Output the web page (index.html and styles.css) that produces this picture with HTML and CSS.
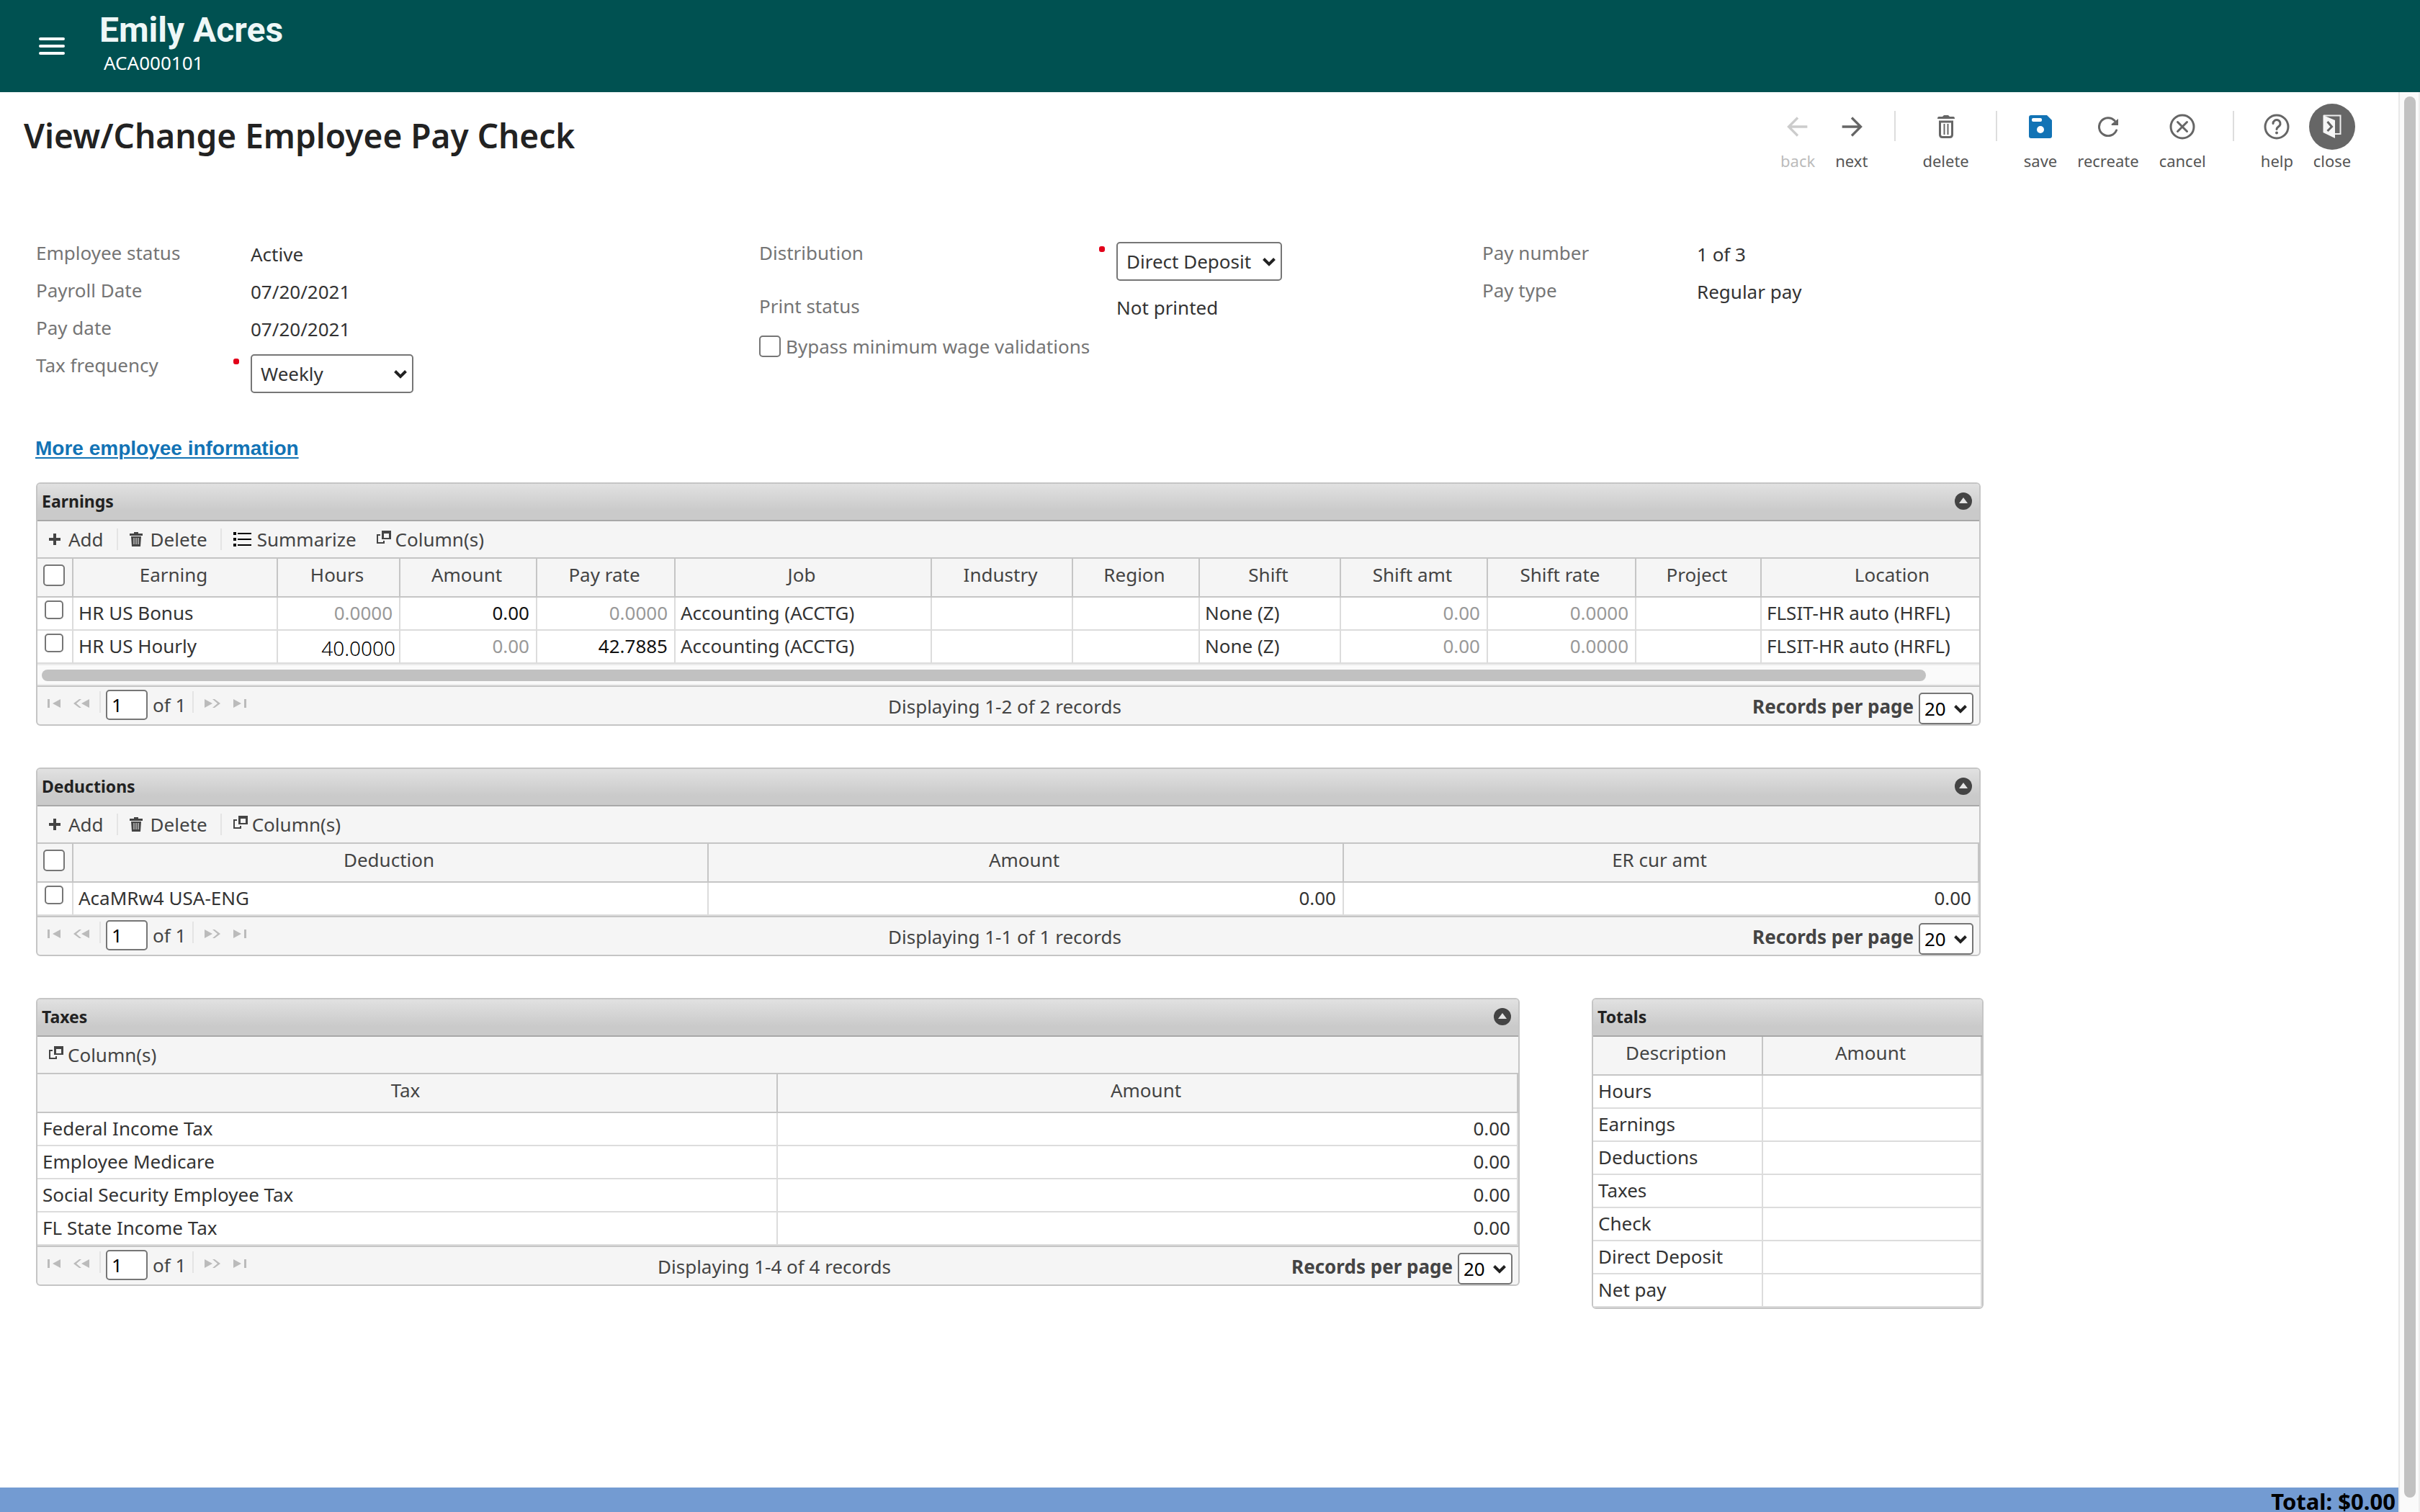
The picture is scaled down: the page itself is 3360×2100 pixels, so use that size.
FILE: index.html
```
<!DOCTYPE html>
<html lang="en">
<head>
    <meta charset="UTF-8">
    <meta name="viewport" content="width=device-width, initial-scale=1.0">
    <title>View/Change Employee Pay Check</title>
    <link rel="stylesheet" href="styles.css">
</head>
<body>

    <!-- ICON SHAPES -->
    <svg class="icon-defs" aria-hidden="true">
        <symbol id="i-plus" viewBox="0 0 16 16"><path d="M6 0h4v6h6v4h-6v6H6v-6H0V6h6z"/></symbol>
        <symbol id="i-trash" viewBox="0 0 18 20"><path d="M6 0h6v2h6v3H0V2h6zM2 6h14l-1 14H3zM5.500 8v9h1V8zm3 0v9h1V8zM11.500 8v9h1V8z" fill-rule="evenodd"/></symbol>
        <symbol id="i-list" viewBox="0 0 25 20"><path d="M0 0h4v4H0zM6 1h19v2H6zM0 8h4v4H0zM6 9h19v2H6zM0 16h4v4H0zM6 17h19v2H6z"/></symbol>
        <symbol id="i-columns" viewBox="0 0 20 18"><path d="M7 0h13v12H7zM10 4v6h7V4zM0 5h5v2H2v9h7v-2h2v4H0z" fill-rule="evenodd"/></symbol>
        <symbol id="i-first" viewBox="0 0 18 12"><path d="M0 0h3v12H0zM18 0v12L7 6z"/></symbol>
        <symbol id="i-prev" viewBox="0 0 22 12"><path d="M22 0v12L11 6zM8 0h3L4 6l7 6H8L0 6z"/></symbol>
        <symbol id="i-next" viewBox="0 0 22 12"><path d="M0 0v12l11-6zM14 0h-3l7 6-7 6h3l8-6z"/></symbol>
        <symbol id="i-last" viewBox="0 0 18 12"><path d="M15 0h3v12h-3zM0 0v12l11-6z"/></symbol>
        <symbol id="i-collapse" viewBox="0 0 24 24"><circle cx="12" cy="12" r="12" fill="#444"/><path d="M12 7l6 8H6z" fill="#e4e4e4"/></symbol>
    </svg>

    <header class="app-header">
        <button class="menu-button" type="button" aria-label="Menu">
            <svg width="36" height="24" viewBox="0 0 36 24"><path d="M2 2h32M2 12h32M2 22h32" stroke="#fff" stroke-width="4" stroke-linecap="round"/></svg>
        </button>
        <div>
            <p class="employee-name">Emily Acres</p>
            <p class="employee-id">ACA000101</p>
        </div>
    </header>

    <div class="viewport">
        <div class="page">
            <main>
                <!-- TITLE AND ACTIONS -->
                <div class="title-row">
                    <h1>View/Change Employee Pay Check</h1>
                    <div class="actions">
                        <button type="button" disabled>
                            <span class="action-icon"><svg width="40" height="40" viewBox="0 0 24 24"><path d="M20 12H5M12 4.500L4.500 12l7.500 7.500" fill="none" stroke="currentColor" stroke-width="2"/></svg></span>
                            back
                        </button>
                        <button type="button">
                            <span class="action-icon"><svg width="40" height="40" viewBox="0 0 24 24"><path d="M4 12h15M12 4.500l7.500 7.500-7.500 7.500" fill="none" stroke="currentColor" stroke-width="2"/></svg></span>
                            next
                        </button>
                        <span class="action-divider"></span>
                        <button type="button">
                            <span class="action-icon"><svg width="24" height="32" viewBox="0 0 24 32"><path d="M3.500 9h17v18q0 3.500-3.500 3.500H7q-3.500 0-3.500-3.500z" fill="none" stroke="currentColor" stroke-width="3"/><path d="M9.500 12v15M14.500 12v15" stroke="currentColor" stroke-width="2"/><path d="M2 2h5l2-2h6l2 2h5q2 0 2 3H0q0-3 2-3z" fill="currentColor"/></svg></span>
                            delete
                        </button>
                        <span class="action-divider"></span>
                        <button type="button">
                            <span class="action-icon"><svg width="32" height="32" viewBox="0 0 32 32"><path d="M3 0h22l7 7v22q0 3-3 3H3q-3 0-3-3V3q0-3 3-3z" fill="#1273b5"/><rect x="4" y="4" width="14" height="5" rx="2" fill="#fff"/><circle cx="16" cy="20" r="5" fill="#fff"/></svg></span>
                            save
                        </button>
                        <button type="button">
                            <span class="action-icon"><svg width="28" height="28" viewBox="0 0 28 28"><path d="M25.500 19A12.500 12.500 0 1 1 23 5.500" fill="none" stroke="currentColor" stroke-width="3" stroke-linecap="round"/><path d="M28 3v9H19q-1-1 0-2z" fill="currentColor"/></svg></span>
                            recreate
                        </button>
                        <button type="button">
                            <span class="action-icon"><svg width="36" height="36" viewBox="0 0 36 36"><g fill="none" stroke="currentColor" stroke-width="3" stroke-linecap="round"><circle cx="18" cy="18" r="16"/><path d="M11.500 11.500l13 13M24.500 11.500l-13 13"/></g></svg></span>
                            cancel
                        </button>
                        <span class="action-divider"></span>
                        <button type="button">
                            <span class="action-icon"><svg width="36" height="36" viewBox="0 0 36 36"><g fill="none" stroke="currentColor" stroke-width="3" stroke-linecap="round"><circle cx="18" cy="18" r="16"/><path d="M13 13.500a5 5 0 1 1 9 3c-2 2.500-4 2.500-4 5"/></g><circle cx="18" cy="26.500" r="2" fill="currentColor"/></svg></span>
                            help
                        </button>
                        <button class="close-button" type="button">
                            <span class="action-icon"><svg width="64" height="64" viewBox="0 0 64 64"><circle cx="32" cy="32" r="32" fill="#666"/><path d="M20 16.500h23.500v25.500H35" fill="none" stroke="#eee" stroke-width="2"/><path d="M19.500 16l16.500 7v25l-16.500-8z" fill="#f6f6f6"/><path d="M25.500 25l6 7-6 6" fill="none" stroke="#666" stroke-width="3"/></svg></span>
                            close
                        </button>
                    </div>
                </div>

                <!-- PAY CHECK DETAILS -->
                <div class="details">
                    <div class="details-column">
                        <div class="field"><span class="field-label">Employee status</span><span class="field-value">Active</span></div>
                        <div class="field"><span class="field-label">Payroll Date</span><span class="field-value">07/20/2021</span></div>
                        <div class="field"><span class="field-label">Pay date</span><span class="field-value">07/20/2021</span></div>
                        <div class="field">
                            <label class="field-label required" for="tax-frequency">Tax frequency</label>
                            <span class="field-value"><select class="select" id="tax-frequency"><option>Weekly</option></select></span>
                        </div>
                    </div>
                    <div class="details-column wide-labels">
                        <div class="field">
                            <label class="field-label required" for="distribution">Distribution</label>
                            <span class="field-value"><select class="select" id="distribution"><option>Direct Deposit</option></select></span>
                        </div>
                        <div class="field"><span class="field-label">Print status</span><span class="field-value">Not printed</span></div>
                        <label class="check-field"><input class="check" type="checkbox">Bypass minimum wage validations</label>
                    </div>
                    <div class="details-column">
                        <div class="field"><span class="field-label">Pay number</span><span class="field-value">1 of 3</span></div>
                        <div class="field"><span class="field-label">Pay type</span><span class="field-value">Regular pay</span></div>
                    </div>
                </div>

                <a class="more-link" href="#more">More employee information</a>

                <!-- EARNINGS -->
                <section class="panel">
                    <div class="panel-header">
                        <h2>Earnings</h2>
                        <button class="collapse" type="button" aria-label="Collapse earnings"><svg width="24" height="24"><use href="#i-collapse"/></svg></button>
                    </div>
                    <div class="panel-tools">
                        <button type="button"><svg width="16" height="16"><use href="#i-plus"/></svg>Add</button>
                        <span class="divider"></span>
                        <button type="button"><svg width="18" height="20"><use href="#i-trash"/></svg>Delete</button>
                        <span class="divider"></span>
                        <button class="summarize" type="button"><svg width="25" height="20"><use href="#i-list"/></svg>Summarize</button>
                        <button class="columns" type="button"><svg width="20" height="18"><use href="#i-columns"/></svg>Column(s)</button>
                    </div>
                    <div class="grid-scroll">
                        <table class="grid earnings-grid">
                            <colgroup>
                                <col class="w-check"><col class="w-earning"><col class="w-hours"><col class="w-amount"><col class="w-rate"><col class="w-job"><col class="w-industry"><col class="w-region"><col class="w-shift"><col class="w-shift-amt"><col class="w-shift-rate"><col class="w-project"><col class="w-location">
                            </colgroup>
                            <thead>
                                <tr>
                                    <th class="check-cell"><input class="check" type="checkbox" aria-label="Select all earnings"></th>
                                    <th>Earning</th><th>Hours</th><th>Amount</th><th>Pay rate</th><th>Job</th><th>Industry</th><th>Region</th><th>Shift</th><th>Shift amt</th><th>Shift rate</th><th>Project</th><th>Location</th>
                                </tr>
                            </thead>
                            <tbody>
                                <tr>
                                    <td class="check-cell"><input class="check" type="checkbox" aria-label="Select HR US Bonus"></td>
                                    <td>HR US Bonus</td><td class="num muted">0.0000</td><td class="num strong">0.00</td><td class="num muted">0.0000</td><td>Accounting (ACCTG)</td><td></td><td></td><td>None (Z)</td><td class="num muted">0.00</td><td class="num muted">0.0000</td><td></td><td>FLSIT-HR auto (HRFL)</td>
                                </tr>
                                <tr>
                                    <td class="check-cell"><input class="check" type="checkbox" aria-label="Select HR US Hourly"></td>
                                    <td>HR US Hourly</td><td class="num edited">40.0000</td><td class="num muted">0.00</td><td class="num strong">42.7885</td><td>Accounting (ACCTG)</td><td></td><td></td><td>None (Z)</td><td class="num muted">0.00</td><td class="num muted">0.0000</td><td></td><td>FLSIT-HR auto (HRFL)</td>
                                </tr>
                            </tbody>
                        </table>
                    </div>
                    <div class="scroll-x"><div class="scroll-x-thumb"></div></div>
                    <div class="pager">
                        <div class="pager-nav">
                            <button type="button" disabled aria-label="First page"><svg width="18" height="12"><use href="#i-first"/></svg></button>
                            <button type="button" disabled aria-label="Previous page"><svg width="22" height="12"><use href="#i-prev"/></svg></button>
                            <span class="divider"></span>
                            <label class="page-number"><input type="text" value="1" aria-label="Page">of 1</label>
                            <span class="divider"></span>
                            <button type="button" disabled aria-label="Next page"><svg width="22" height="12"><use href="#i-next"/></svg></button>
                            <button type="button" disabled aria-label="Last page"><svg width="18" height="12"><use href="#i-last"/></svg></button>
                        </div>
                        <span class="pager-status">Displaying 1-2 of 2 records</span>
                        <label class="page-size">Records per page <select class="select"><option>20</option></select></label>
                    </div>
                </section>

                <!-- DEDUCTIONS -->
                <section class="panel">
                    <div class="panel-header">
                        <h2>Deductions</h2>
                        <button class="collapse" type="button" aria-label="Collapse deductions"><svg width="24" height="24"><use href="#i-collapse"/></svg></button>
                    </div>
                    <div class="panel-tools">
                        <button type="button"><svg width="16" height="16"><use href="#i-plus"/></svg>Add</button>
                        <span class="divider"></span>
                        <button type="button"><svg width="18" height="20"><use href="#i-trash"/></svg>Delete</button>
                        <span class="divider"></span>
                        <button class="columns" type="button"><svg width="20" height="18"><use href="#i-columns"/></svg>Column(s)</button>
                    </div>
                    <table class="grid">
                        <colgroup><col class="w-check"><col><col><col></colgroup>
                        <thead>
                            <tr><th class="check-cell"><input class="check" type="checkbox" aria-label="Select all deductions"></th><th>Deduction</th><th>Amount</th><th>ER cur amt</th></tr>
                        </thead>
                        <tbody>
                            <tr><td class="check-cell"><input class="check" type="checkbox" aria-label="Select AcaMRw4 USA-ENG"></td><td>AcaMRw4 USA-ENG</td><td class="num">0.00</td><td class="num">0.00</td></tr>
                        </tbody>
                    </table>
                    <div class="pager">
                        <div class="pager-nav">
                            <button type="button" disabled aria-label="First page"><svg width="18" height="12"><use href="#i-first"/></svg></button>
                            <button type="button" disabled aria-label="Previous page"><svg width="22" height="12"><use href="#i-prev"/></svg></button>
                            <span class="divider"></span>
                            <label class="page-number"><input type="text" value="1" aria-label="Page">of 1</label>
                            <span class="divider"></span>
                            <button type="button" disabled aria-label="Next page"><svg width="22" height="12"><use href="#i-next"/></svg></button>
                            <button type="button" disabled aria-label="Last page"><svg width="18" height="12"><use href="#i-last"/></svg></button>
                        </div>
                        <span class="pager-status">Displaying 1-1 of 1 records</span>
                        <label class="page-size">Records per page <select class="select"><option>20</option></select></label>
                    </div>
                </section>

                <div class="panel-row">
                    <!-- TAXES -->
                    <section class="panel taxes">
                        <div class="panel-header">
                            <h2>Taxes</h2>
                            <button class="collapse" type="button" aria-label="Collapse taxes"><svg width="24" height="24"><use href="#i-collapse"/></svg></button>
                        </div>
                        <div class="panel-tools">
                            <button class="columns" type="button"><svg width="20" height="18"><use href="#i-columns"/></svg>Column(s)</button>
                        </div>
                        <table class="grid">
                            <thead>
                                <tr><th>Tax</th><th>Amount</th></tr>
                            </thead>
                            <tbody>
                                <tr><td>Federal Income Tax</td><td class="num">0.00</td></tr>
                                <tr><td>Employee Medicare</td><td class="num">0.00</td></tr>
                                <tr><td>Social Security Employee Tax</td><td class="num">0.00</td></tr>
                                <tr><td>FL State Income Tax</td><td class="num">0.00</td></tr>
                            </tbody>
                        </table>
                        <div class="pager">
                            <div class="pager-nav">
                                <button type="button" disabled aria-label="First page"><svg width="18" height="12"><use href="#i-first"/></svg></button>
                                <button type="button" disabled aria-label="Previous page"><svg width="22" height="12"><use href="#i-prev"/></svg></button>
                                <span class="divider"></span>
                                <label class="page-number"><input type="text" value="1" aria-label="Page">of 1</label>
                                <span class="divider"></span>
                                <button type="button" disabled aria-label="Next page"><svg width="22" height="12"><use href="#i-next"/></svg></button>
                                <button type="button" disabled aria-label="Last page"><svg width="18" height="12"><use href="#i-last"/></svg></button>
                            </div>
                            <span class="pager-status">Displaying 1-4 of 4 records</span>
                            <label class="page-size">Records per page <select class="select"><option>20</option></select></label>
                        </div>
                    </section>

                    <!-- TOTALS -->
                    <section class="panel totals">
                        <div class="panel-header"><h2>Totals</h2></div>
                        <table class="grid">
                            <colgroup><col class="w-description"><col></colgroup>
                            <thead>
                                <tr><th>Description</th><th>Amount</th></tr>
                            </thead>
                            <tbody>
                                <tr><td>Hours</td><td></td></tr>
                                <tr><td>Earnings</td><td></td></tr>
                                <tr><td>Deductions</td><td></td></tr>
                                <tr><td>Taxes</td><td></td></tr>
                                <tr><td>Check</td><td></td></tr>
                                <tr><td>Direct Deposit</td><td></td></tr>
                                <tr><td>Net pay</td><td></td></tr>
                            </tbody>
                        </table>
                    </section>
                </div>
            </main>
            <footer class="total-bar">Total: $0.00</footer>
        </div>
        <div class="scroll-y"><div class="scroll-y-thumb"></div></div>
    </div>

</body>
</html>
```
FILE: styles.css
```
:root {
    --header-color: #005151;
    --text-color: #333;
    --label-color: #757575;
    --tool-color: #444;
    --border-color: #c5c5c5;
    --line-color: #dcdcdc;
    --surface-color: #f5f5f5;
    --control-border: #767676;
    --link-color: #1273b5;
    --font-family: "Noto Sans", "Open Sans", sans-serif;
}

* {
    box-sizing: border-box;
}
body {
    margin: 0;
    height: 100vh;
    display: flex;
    flex-direction: column;
    overflow: hidden;
    font-family: var(--font-family);
    font-size: 26px;
    line-height: 34px;
    color: var(--text-color);
    background-color: #fff;
}
button, input, select {
    font: inherit;
    color: inherit;
    margin: 0;
}
button {
    border: none;
    background: none;
    padding: 0;
}
svg {
    display: block;
    flex: none;
}
.icon-defs {
    display: none;
}

/* Header */
.app-header {
    flex: none;
    display: flex;
    height: 128px;
    background-color: var(--header-color);
    color: #fff;
}
.app-header p {
    margin: 0;
}
.menu-button {
    width: 138px;
    padding-left: 54px;
}
.employee-name {
    padding-top: 14px;
    font-family: Roboto, sans-serif;
    font-size: 48px;
    font-weight: 700;
    line-height: 56px;
    color: #eef7f7;
}
.employee-id {
    padding-left: 6px;
}

/* Page area with its scrollbar */
.viewport {
    flex: 1;
    display: flex;
    min-height: 0;
}
.page {
    flex: 1;
    display: flex;
    flex-direction: column;
    min-width: 0;
}
main {
    flex: 1;
    min-height: 0;
    overflow: hidden;
}
.scroll-y {
    width: 30px;
    padding: 6px 4px 20px 6px;
    background-color: #fafafa;
    border-left: 2px solid #e8e8e8;
    border-right: 2px solid #ededed;
}
.scroll-y-thumb {
    width: 16px;
    height: 100%;
    border-radius: 8px;
    background-color: #c1c1c1;
}

/* Title and actions */
.title-row {
    display: flex;
    justify-content: space-between;
    height: 112px;
    padding: 16px 52px 0 33px;
}
h1 {
    margin: 12px 0 0;
    font-size: 46px;
    font-weight: 600;
    line-height: 64px;
    color: #222;
}
.actions {
    display: flex;
}
.actions button {
    display: flex;
    flex-direction: column;
    align-items: center;
    padding: 0 14px;
    font-size: 22px;
    line-height: 30px;
    color: #555;
}
.actions .close-button {
    padding: 0 8px;
}
.actions button:disabled {
    color: #bbb;
}
.action-icon {
    display: flex;
    align-items: center;
    justify-content: center;
    width: 100%;
    height: 64px;
    color: #666;
}
.actions button:disabled .action-icon {
    color: #ccc;
}
.action-divider {
    width: 2px;
    height: 42px;
    margin: 10px 23px 0;
    background-color: #ddd;
}

/* Details */
.details {
    display: flex;
    padding: 94px 0 0 50px;
}
.details-column {
    width: 1004px;
}
.field {
    display: flex;
    margin-bottom: 16px;
}
.field-label {
    width: 298px;
    color: var(--label-color);
}
.wide-labels .field-label {
    width: 496px;
}
.required {
    display: flex;
    justify-content: space-between;
}
.required::after {
    content: "";
    width: 8px;
    height: 8px;
    margin: 8px 16px 0 0;
    border-radius: 3px;
    background-color: #e2001a;
}
.field-value {
    padding-top: 2px;
}
.select {
    appearance: none;
    display: block;
    height: 54px;
    padding: 0 40px 0 12px;
    border: 2px solid var(--control-border);
    border-radius: 5px;
    background: #fff url("data:image/svg+xml,%3Csvg xmlns='http://www.w3.org/2000/svg' width='20' height='13'%3E%3Cpath d='M2.500 2.500L10 10l7.500-7.500' fill='none' stroke='%23222' stroke-width='4'/%3E%3C/svg%3E") no-repeat right 6px center;
}
.field .select {
    min-width: 226px;
    margin-bottom: 2px;
}
.check {
    appearance: none;
    flex: none;
    display: block;
    width: 30px;
    height: 30px;
    border: 2px solid var(--control-border);
    border-radius: 5px;
    background-color: #fff;
}
.check-field {
    display: flex;
    align-items: center;
    gap: 7px;
    padding-top: 4px;
    color: var(--label-color);
}
.more-link {
    display: inline-block;
    margin: 43px 0 31px 49px;
    font-family: "Liberation Sans", Arial, sans-serif;
    font-size: 28px;
    font-weight: 700;
    line-height: 32px;
    color: var(--link-color);
    text-decoration-thickness: 2px;
    text-underline-offset: 3px;
}

/* Panels */
.panel {
    max-width: 2700px;
    margin: 0 0 58px 50px;
    border: 2px solid var(--border-color);
    border-radius: 6px;
    background-color: var(--surface-color);
    overflow: hidden;
}
.panel-header {
    display: flex;
    align-items: center;
    justify-content: space-between;
    height: 52px;
    padding: 0 10px 2px 6px;
    background: linear-gradient(#e1e1e1, #cacaca 75%);
    border-bottom: 2px solid #a8a8a8;
}
h2 {
    margin: 0;
    font-size: 23px;
    font-weight: 700;
    line-height: 30px;
    color: #222;
}
.panel-tools {
    display: flex;
    align-items: center;
    height: 52px;
    color: var(--tool-color);
    border-bottom: 2px solid var(--border-color);
}
.panel-tools button {
    display: flex;
    align-items: center;
    gap: 11px;
    padding: 0 18px 0 16px;
}
.panel-tools svg, .pager-nav svg {
    fill: currentColor;
}
.panel-tools .summarize {
    gap: 8px;
    padding-right: 12px;
}
.panel-tools .columns {
    gap: 6px;
}
.columns svg {
    margin-bottom: 6px;
}
.summarize svg {
    fill: #000;
}
.divider {
    width: 2px;
    height: 30px;
    background-color: #e4e4e4;
}
.panel-row {
    display: flex;
    align-items: flex-start;
}
.taxes {
    width: 2060px;
}
.totals {
    width: 544px;
    margin-left: 100px;
}

/* Grids */
.grid-scroll {
    overflow: hidden;
}
.grid {
    width: 100%;
    table-layout: fixed;
    border-collapse: separate;
    border-spacing: 0;
}
.earnings-grid {
    width: 2762px;
}
.grid th {
    height: 54px;
    padding: 0 4px 8px 0;
    font-weight: 400;
    color: var(--tool-color);
    border-right: 2px solid var(--border-color);
    border-bottom: 2px solid var(--border-color);
}
.grid td {
    height: 46px;
    padding: 0 7px 2px;
    white-space: nowrap;
    background-color: #fff;
    border-right: 2px solid var(--line-color);
    border-bottom: 2px solid var(--line-color);
}
.grid .check-cell {
    padding: 8px;
    vertical-align: top;
}
.grid td.check-cell {
    padding: 4px 10px;
}
td .check {
    width: 26px;
    height: 26px;
}
.grid .num {
    padding-right: 9px;
    text-align: right;
}
.muted {
    color: #999;
}
.strong {
    color: #111;
}
.grid .edited {
    padding: 4px 5px 0 0;
    font-size: 28px;
    font-weight: 300;
    color: #000;
}
.w-check { width: 50px; }
.w-earning { width: 284px; }
.w-hours { width: 170px; }
.w-amount { width: 190px; }
.w-rate { width: 192px; }
.w-job { width: 356px; }
.w-industry { width: 196px; }
.w-region { width: 176px; }
.w-shift { width: 196px; }
.w-shift-amt { width: 204px; }
.w-shift-rate { width: 206px; }
.w-project { width: 174px; }
.w-location { width: 368px; }
.w-description { width: 236px; }

.scroll-x {
    height: 30px;
    padding: 6px 74px 4px 6px;
    background-color: #fafafa;
    border-top: 2px solid #ebebeb;
    border-bottom: 2px solid #ededed;
}
.scroll-x-thumb {
    height: 16px;
    border-radius: 8px;
    background-color: #c1c1c1;
}

/* Pager */
.pager {
    display: grid;
    grid-template-columns: 1fr auto 1fr;
    height: 54px;
    padding: 0 8px;
    color: var(--tool-color);
    border-top: 2px solid var(--border-color);
}
.pager-nav {
    display: flex;
    align-items: center;
    height: 46px;
    padding-left: 6px;
}
.pager-nav button {
    margin-right: 18px;
    color: #bbb;
}
.pager-nav .divider {
    margin-bottom: 4px;
}
.pager-nav button:nth-child(2) {
    margin-right: 14px;
}
.page-number {
    display: flex;
    align-items: center;
    gap: 7px;
    margin: 4px 9px 0 7px;
}
.page-number input {
    width: 58px;
    height: 42px;
    padding: 0 6px;
    border: 2px solid var(--control-border);
    border-radius: 5px;
    color: #000;
}
.page-number + .divider {
    margin-right: 15px;
}
.pager-status {
    padding: 10px 10px 0 0;
}
.page-size {
    display: flex;
    justify-content: flex-end;
    gap: 7px;
    padding-top: 10px;
    font-weight: 700;
}
.page-size .select {
    width: 76px;
    height: 44px;
    margin-top: -2px;
    padding: 0 0 0 6px;
    font-weight: 400;
    color: #000;
}

/* Running total */
.total-bar {
    flex: none;
    height: 34px;
    padding-right: 4px;
    font-size: 31px;
    font-weight: 700;
    line-height: 38px;
    text-align: right;
    color: #000;
    background-color: #739bd2;
}
```
